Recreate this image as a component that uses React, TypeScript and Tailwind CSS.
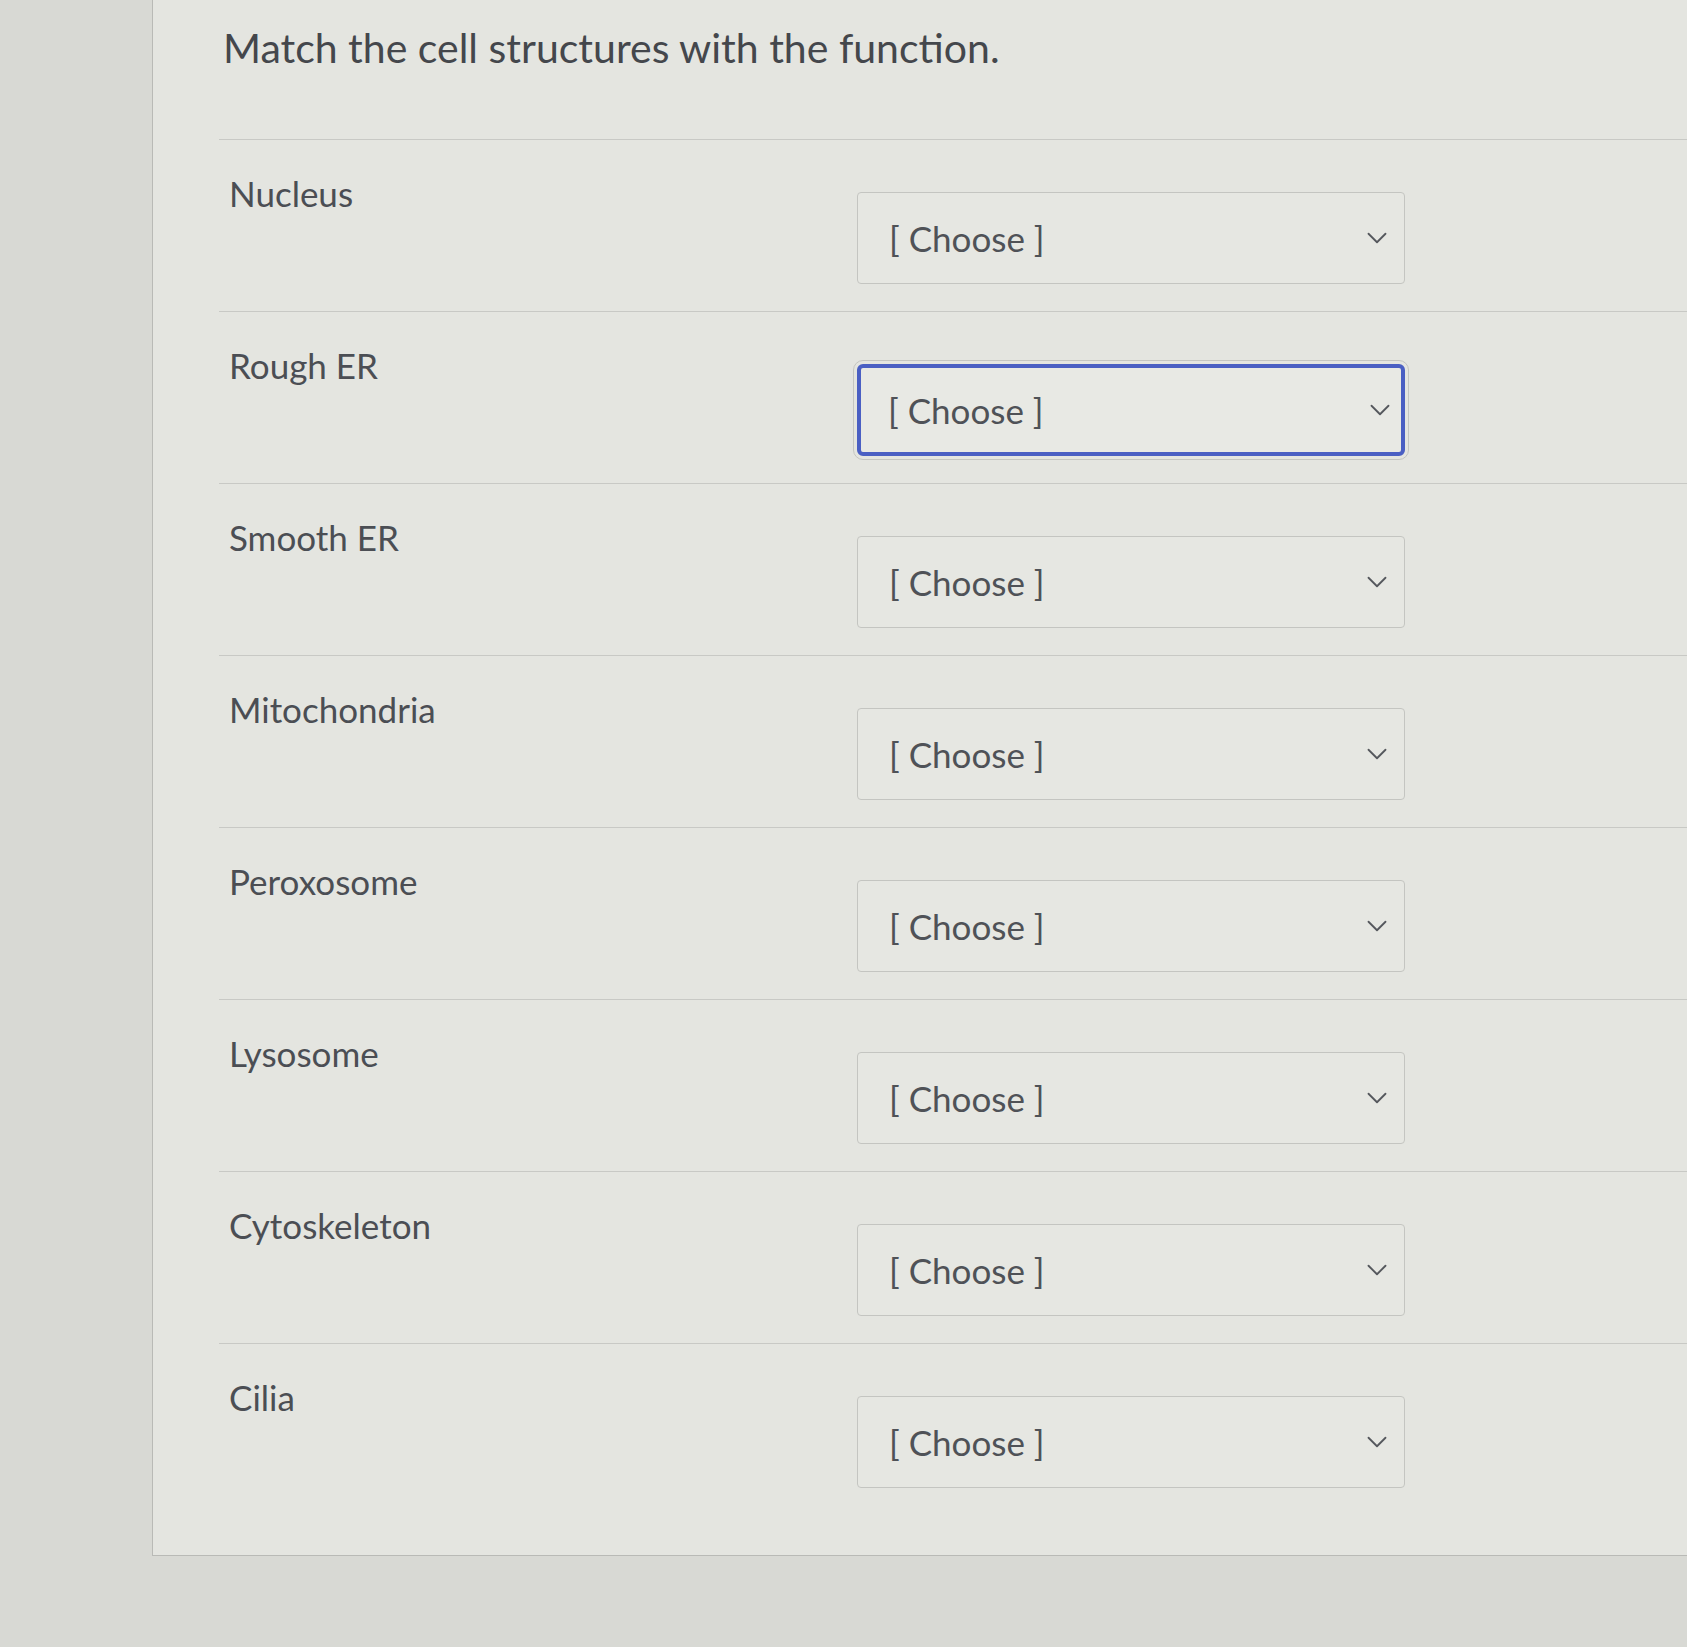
import { ChevronDown } from "lucide-react";

const STRUCTURES = [
  "Nucleus",
  "Rough ER",
  "Smooth ER",
  "Mitochondria",
  "Peroxosome",
  "Lysosome",
  "Cytoskeleton",
  "Cilia",
];

function ChooseSelect({ focused }: { focused?: boolean }) {
  return (
    <div
      className={
        focused
          ? "h-[92px] w-[548px] rounded-[6px] border-[4px] border-[#4a5fc3] bg-[#e8e9e4] outline outline-1 outline-offset-[3px] outline-[#c4c5c1] flex items-center justify-between pl-[27px] pr-[4px]"
          : "h-[92px] w-[548px] rounded-[4px] border border-[#c4c5c1] bg-[#e6e7e2] flex items-center justify-between pl-[31px] pr-[10px]"
      }
    >
      <span className="text-[35px] text-[#4f5257]">[ Choose ]</span>
      <ChevronDown className="w-[34px] h-[34px] text-[#55585d]" strokeWidth={1.3} />
    </div>
  );
}

export default function App() {
  return (
    <div
      className="w-[1687px] h-[1647px] bg-[#d8d9d4] flex overflow-hidden"
      style={{ fontFamily: "Lato, 'Open Sans', sans-serif" }}
    >
      <div className="w-[152px] shrink-0" />
      <div className="flex-1 h-[1556px] bg-[#e4e5e0] border-l border-b border-[#b9bab6] pl-[66px]">
        {/* Title */}
        <div className="h-[140px] border-b border-[#c8c9c5] pt-[20px] pl-[4px]">
          <h1 className="text-[41px] leading-[56px] text-[#44474c]">
            Match the cell structures with the function.
          </h1>
        </div>

        {/* Rows */}
        {STRUCTURES.map((name, i) => (
          <div
            key={name}
            className={
              i === STRUCTURES.length - 1
                ? "h-[172px] flex"
                : "h-[172px] flex border-b border-[#c8c9c5]"
            }
          >
            <div className="w-[638px] shrink-0 pt-[32px] pl-[10px] text-[35px] leading-[42px] text-[#4b4e54]">
              {name}
            </div>
            <div className="pt-[52px]">
              <ChooseSelect focused={i === 1} />
            </div>
          </div>
        ))}
      </div>
    </div>
  );
}
